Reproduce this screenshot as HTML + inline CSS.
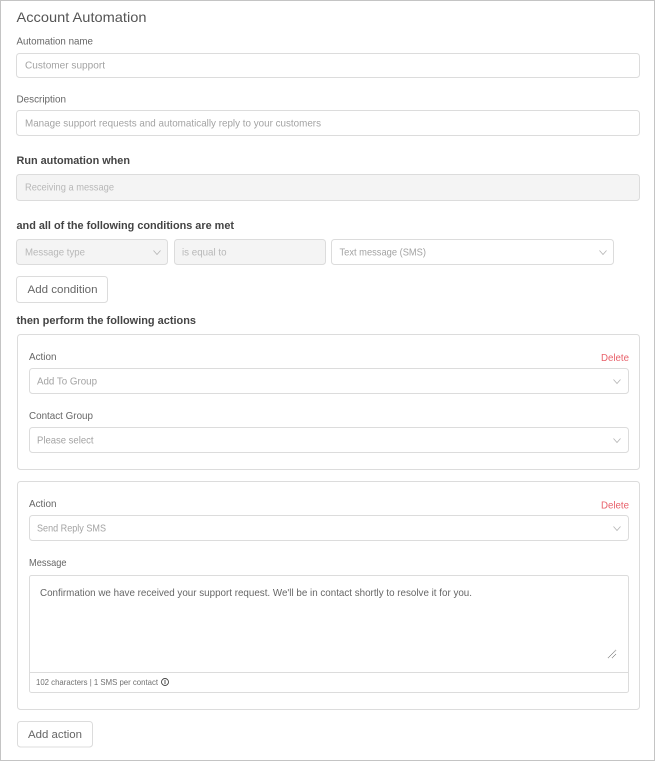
<!DOCTYPE html>
<html lang="en">
<head>
<meta charset="utf-8">
<title>Account Automation</title>
<style>
html,body{margin:0;padding:0;background:#fff;width:655px;height:761px;overflow:hidden}
svg{display:block}
text{font-family:"Liberation Sans",sans-serif;font-size:10.5px;fill:#666}
.ph{fill:#a3a3a3}
.dis{fill:#b8b8b8}
.b{font-weight:bold;fill:#444;font-size:11px}
.box{fill:#fff;stroke:#dcdcdc;stroke-width:1}
.gray{fill:#f4f4f4;stroke:#dcdcdc;stroke-width:1}
.chev{fill:none;stroke:#b4b4b4;stroke-width:.8}
.del{fill:#e8606a}
</style>
</head>
<body>
<svg width="655" height="761" viewBox="0 0 655 761" xmlns="http://www.w3.org/2000/svg">
<rect x="0.5" y="0.5" width="654" height="760" fill="#fff" stroke="#c4c4c4"/>

<text x="16.5" y="22" style="font-size:14px;fill:#555" textLength="130" lengthAdjust="spacingAndGlyphs">Account Automation</text>

<text x="16.5" y="44.500" textLength="76.500" lengthAdjust="spacingAndGlyphs">Automation name</text>
<rect class="box" x="16.500" y="53.500" width="623" height="24" rx="3"/>
<text class="ph" x="25" y="68.500" textLength="80" lengthAdjust="spacingAndGlyphs">Customer support</text>

<text x="16.500" y="102.500" textLength="49.500" lengthAdjust="spacingAndGlyphs">Description</text>
<rect class="box" x="16.500" y="110.500" width="623" height="25" rx="3"/>
<text class="ph" x="25" y="126.500" textLength="296" lengthAdjust="spacingAndGlyphs">Manage support requests and automatically reply to your customers</text>

<text class="b" x="16.500" y="164" textLength="113.500" lengthAdjust="spacingAndGlyphs">Run automation when</text>
<rect class="gray" x="16.500" y="174.500" width="623" height="26" rx="3"/>
<text class="dis" x="25" y="190.500" textLength="89" lengthAdjust="spacingAndGlyphs">Receiving a message</text>

<text class="b" x="16.500" y="229" textLength="217.500" lengthAdjust="spacingAndGlyphs">and all of the following conditions are met</text>
<rect class="gray" x="16.500" y="239.500" width="151" height="25" rx="3"/>
<text class="dis" x="25" y="255.500" textLength="60" lengthAdjust="spacingAndGlyphs">Message type</text>
<path class="chev" d="M153.500 250.500l3.500 4 3.500-4"/>
<rect class="gray" x="174.500" y="239.500" width="151" height="25" rx="3"/>
<text class="dis" x="182" y="255.500" textLength="44.500" lengthAdjust="spacingAndGlyphs">is equal to</text>
<rect class="box" x="331.500" y="239.500" width="282" height="25" rx="3"/>
<text class="ph" x="339.500" y="255.500" textLength="86.500" lengthAdjust="spacingAndGlyphs">Text message (SMS)</text>
<path class="chev" d="M599.500 250.500l3.500 4 3.500-4"/>

<rect class="box" x="16.500" y="276.500" width="91" height="26" rx="3"/>
<text x="27.500" y="293" style="font-size:11px" textLength="70" lengthAdjust="spacingAndGlyphs">Add condition</text>

<text class="b" x="16.500" y="324" textLength="179.500" lengthAdjust="spacingAndGlyphs">then perform the following actions</text>

<rect class="box" x="17.500" y="334.500" width="622" height="135" rx="3"/>
<text x="29" y="360" textLength="27.500" lengthAdjust="spacingAndGlyphs">Action</text>
<text class="del" x="601" y="361" textLength="28" lengthAdjust="spacingAndGlyphs">Delete</text>
<rect class="box" x="29.500" y="368.500" width="599" height="25" rx="3"/>
<text class="ph" x="37" y="384.500" textLength="60" lengthAdjust="spacingAndGlyphs">Add To Group</text>
<path class="chev" d="M613.500 379.500l3.500 4 3.500-4"/>
<text x="29" y="419" textLength="64" lengthAdjust="spacingAndGlyphs">Contact Group</text>
<rect class="box" x="29.500" y="427.500" width="599" height="25" rx="3"/>
<text class="ph" x="37" y="443.500" textLength="56.500" lengthAdjust="spacingAndGlyphs">Please select</text>
<path class="chev" d="M613.500 438.500l3.500 4 3.500-4"/>

<rect class="box" x="17.500" y="481.500" width="622" height="228" rx="3"/>
<text x="29" y="507" textLength="27.500" lengthAdjust="spacingAndGlyphs">Action</text>
<text class="del" x="601" y="508.500" textLength="28" lengthAdjust="spacingAndGlyphs">Delete</text>
<rect class="box" x="29.500" y="515.500" width="599" height="25" rx="3"/>
<text class="ph" x="37" y="531.500" textLength="69" lengthAdjust="spacingAndGlyphs">Send Reply SMS</text>
<path class="chev" d="M613.500 526.500l3.500 4 3.500-4"/>
<text x="29" y="566" textLength="37.500" lengthAdjust="spacingAndGlyphs">Message</text>
<rect class="box" x="29.500" y="575.500" width="599" height="117" rx="2"/>
<path d="M30 672.500H628" stroke="#dcdcdc" fill="none"/>
<text x="40" y="596" textLength="432" lengthAdjust="spacingAndGlyphs">Confirmation we have received your support request. We'll be in contact shortly to resolve it for you.</text>
<path d="M608 658l8-8M612 658l4-4" stroke="#888" stroke-width="1" stroke-dasharray="1 .5" fill="none"/>
<text x="36" y="685" style="font-size:8.5px;fill:#707070" textLength="122" lengthAdjust="spacingAndGlyphs">102 characters | 1 SMS per contact</text>
<circle cx="165" cy="682" r="3.5" fill="none" stroke="#444" stroke-width=".9"/>
<path d="M165 680v4" stroke="#444" stroke-width=".9" fill="none"/>

<rect class="box" x="17.500" y="721.500" width="75" height="25.500" rx="3"/>
<text x="28" y="738" style="font-size:11px" textLength="54" lengthAdjust="spacingAndGlyphs">Add action</text>
</svg>
</body>
</html>
